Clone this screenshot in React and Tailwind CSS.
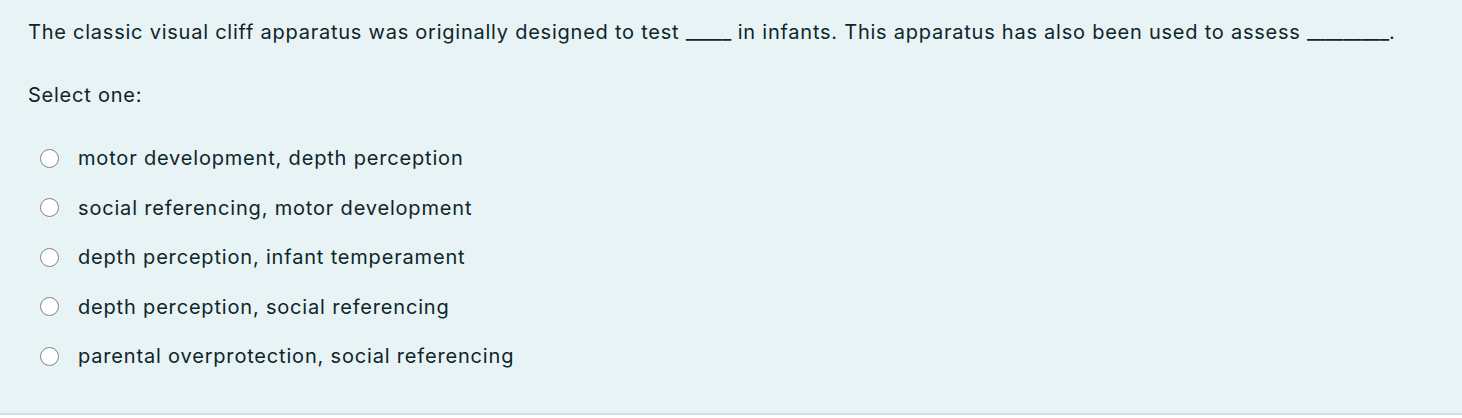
const options = [
  'motor development, depth perception',
  'social referencing, motor development',
  'depth perception, infant temperament',
  'depth perception, social referencing',
  'parental overprotection, social referencing',
];

function Radio() {
  return (
    <span className="w-[19px] h-[19px] rounded-full border-[1.5px] border-[#7d8285] bg-white shrink-0"></span>
  );
}

function Blank({ count }) {
  return <span className="tracking-normal">{'_'.repeat(count)}</span>;
}

export default function App() {
  return (
    <div className="w-full bg-white" style={{ fontFamily: 'Inter, "Liberation Sans", sans-serif' }}>
      <div className="h-[415px] bg-[#e7f3f5] border-b-2 border-[#c5e3e8] text-[#0f2529] text-[20px] leading-[30px] px-[28px] pt-[17px] tracking-[0.76px]">
        <p>
          The classic visual cliff apparatus was originally designed to test <Blank count={5} /> in infants. This apparatus has also been used to assess <Blank count={9} />.
        </p>
        <p className="mt-[33px]">Select one:</p>
        <div className="mt-[33px] flex flex-col gap-[19.5px] pl-[12px] tracking-[0.82px]">
          {options.map((o) => (
            <label key={o} className="flex items-center gap-[19px]">
              <Radio />
              <span>{o}</span>
            </label>
          ))}
        </div>
      </div>
    </div>
  );
}
